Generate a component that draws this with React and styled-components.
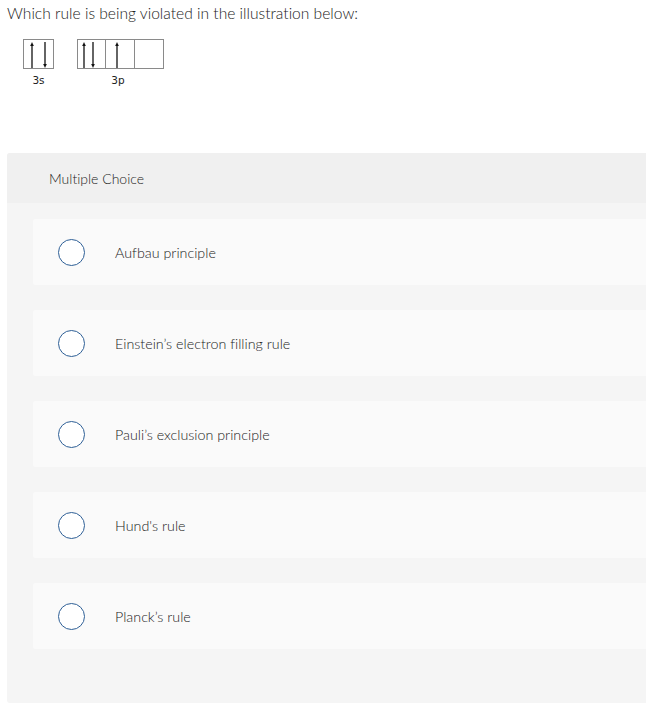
import React, { useState } from "react";
import styled, { createGlobalStyle } from "styled-components";

const GlobalStyle = createGlobalStyle`
  html, body {
    margin: 0;
    padding: 0;
    background: #ffffff;
    overflow: hidden;
  }
  body {
    font-family: Lato, "Open Sans", Arial, sans-serif;
    font-variant-ligatures: none;
    color: #333333;
  }
`;

const Page = styled.div`
  width: 646px;
  height: 705px;
  overflow: hidden;
`;

const Question = styled.div`
  padding: 3px 0 0 7px;
  font-size: 15.6px;
  font-weight: 300;
  line-height: 20px;
  color: #222;
`;

const Figure = styled.div`
  padding: 7px 0 0 22px;
  height: 60px;
`;

const Panel = styled.div`
  margin: 63px 0 0 7px;
  width: 660px;
  height: 550px;
  background: #f5f5f5;
  border-radius: 3px;
  overflow: hidden;
`;

const PanelHeader = styled.div`
  height: 50px;
  display: flex;
  align-items: center;
  padding-left: 42px;
  background: #f0f0f0;
  font-size: 14px;
  font-weight: 300;
  color: #222;
`;

const Choices = styled.div`
  display: flex;
  flex-direction: column;
  gap: 25px;
  padding: 16px 0 0 26px;
`;

const Choice = styled.label`
  height: 66px;
  display: flex;
  align-items: center;
  background: #fafafa;
  border-radius: 2px;
  padding-left: 25px;
  cursor: pointer;
  font-size: 14.3px;
  font-weight: 300;
  color: #222;
`;

const Radio = styled.span`
  width: 25px;
  height: 25px;
  border-radius: 50%;
  border: 1.5px solid #2e5f96;
  background: ${(p) => (p.$checked ? "#2e5f96" : "#ffffff")};
  box-shadow: ${(p) => (p.$checked ? "inset 0 0 0 5px #fff" : "none")};
  flex-shrink: 0;
  margin-right: 30px;
`;

function Arrow({ x, up }) {
  const y1 = 42;
  const y2 = 68;
  return (
    <g>
      <line x1={x} y1={y1 + (up ? 3 : 0)} x2={x} y2={y2 - (up ? 0 : 3)} stroke="#111" strokeWidth="1.3" />
      {up ? (
        <polygon points={`${x - 1.8},${y1 + 4} ${x + 1.8},${y1 + 4} ${x},${y1}`} fill="#111" />
      ) : (
        <polygon points={`${x - 1.8},${y2 - 4} ${x + 1.8},${y2 - 4} ${x},${y2}`} fill="#111" />
      )}
    </g>
  );
}

function OrbitalDiagram() {
  return (
    <svg width="150" height="60" viewBox="22 30 150 60">
      <g fill="#fff" stroke="#8a8a8a" strokeWidth="1">
        <rect x="23.5" y="39.5" width="30" height="29" />
        <rect x="77.5" y="39.5" width="28" height="29" />
        <rect x="105.5" y="39.5" width="29" height="29" />
        <rect x="134.5" y="39.5" width="29" height="29" />
      </g>
      <Arrow x={32} up />
      <Arrow x={45} />
      <Arrow x={84} up />
      <Arrow x={93} />
      <Arrow x={117} up />
      <text x="38.5" y="84" textAnchor="middle" fontFamily="'DejaVu Sans', Verdana, sans-serif" fontSize="10.5" fill="#222">3s</text>
      <text x="118" y="84" textAnchor="middle" fontFamily="'DejaVu Sans', Verdana, sans-serif" fontSize="10.5" fill="#222">3p</text>
    </svg>
  );
}

const options = [
  "Aufbau principle",
  "Einstein\u2019s electron filling rule",
  "Pauli\u2019s exclusion principle",
  "Hund's rule",
  "Planck\u2019s rule",
];

export default function App() {
  const [selected, setSelected] = useState(null);
  return (
    <Page>
      <GlobalStyle />
      <Question>Which rule is being violated in the illustration below:</Question>
      <Figure>
        <OrbitalDiagram />
      </Figure>
      <Panel>
        <PanelHeader>Multiple Choice</PanelHeader>
        <Choices>
          {options.map((opt, i) => (
            <Choice key={opt} onClick={() => setSelected(i)}>
              <Radio $checked={selected === i} />
              {opt}
            </Choice>
          ))}
        </Choices>
      </Panel>
    </Page>
  );
}
